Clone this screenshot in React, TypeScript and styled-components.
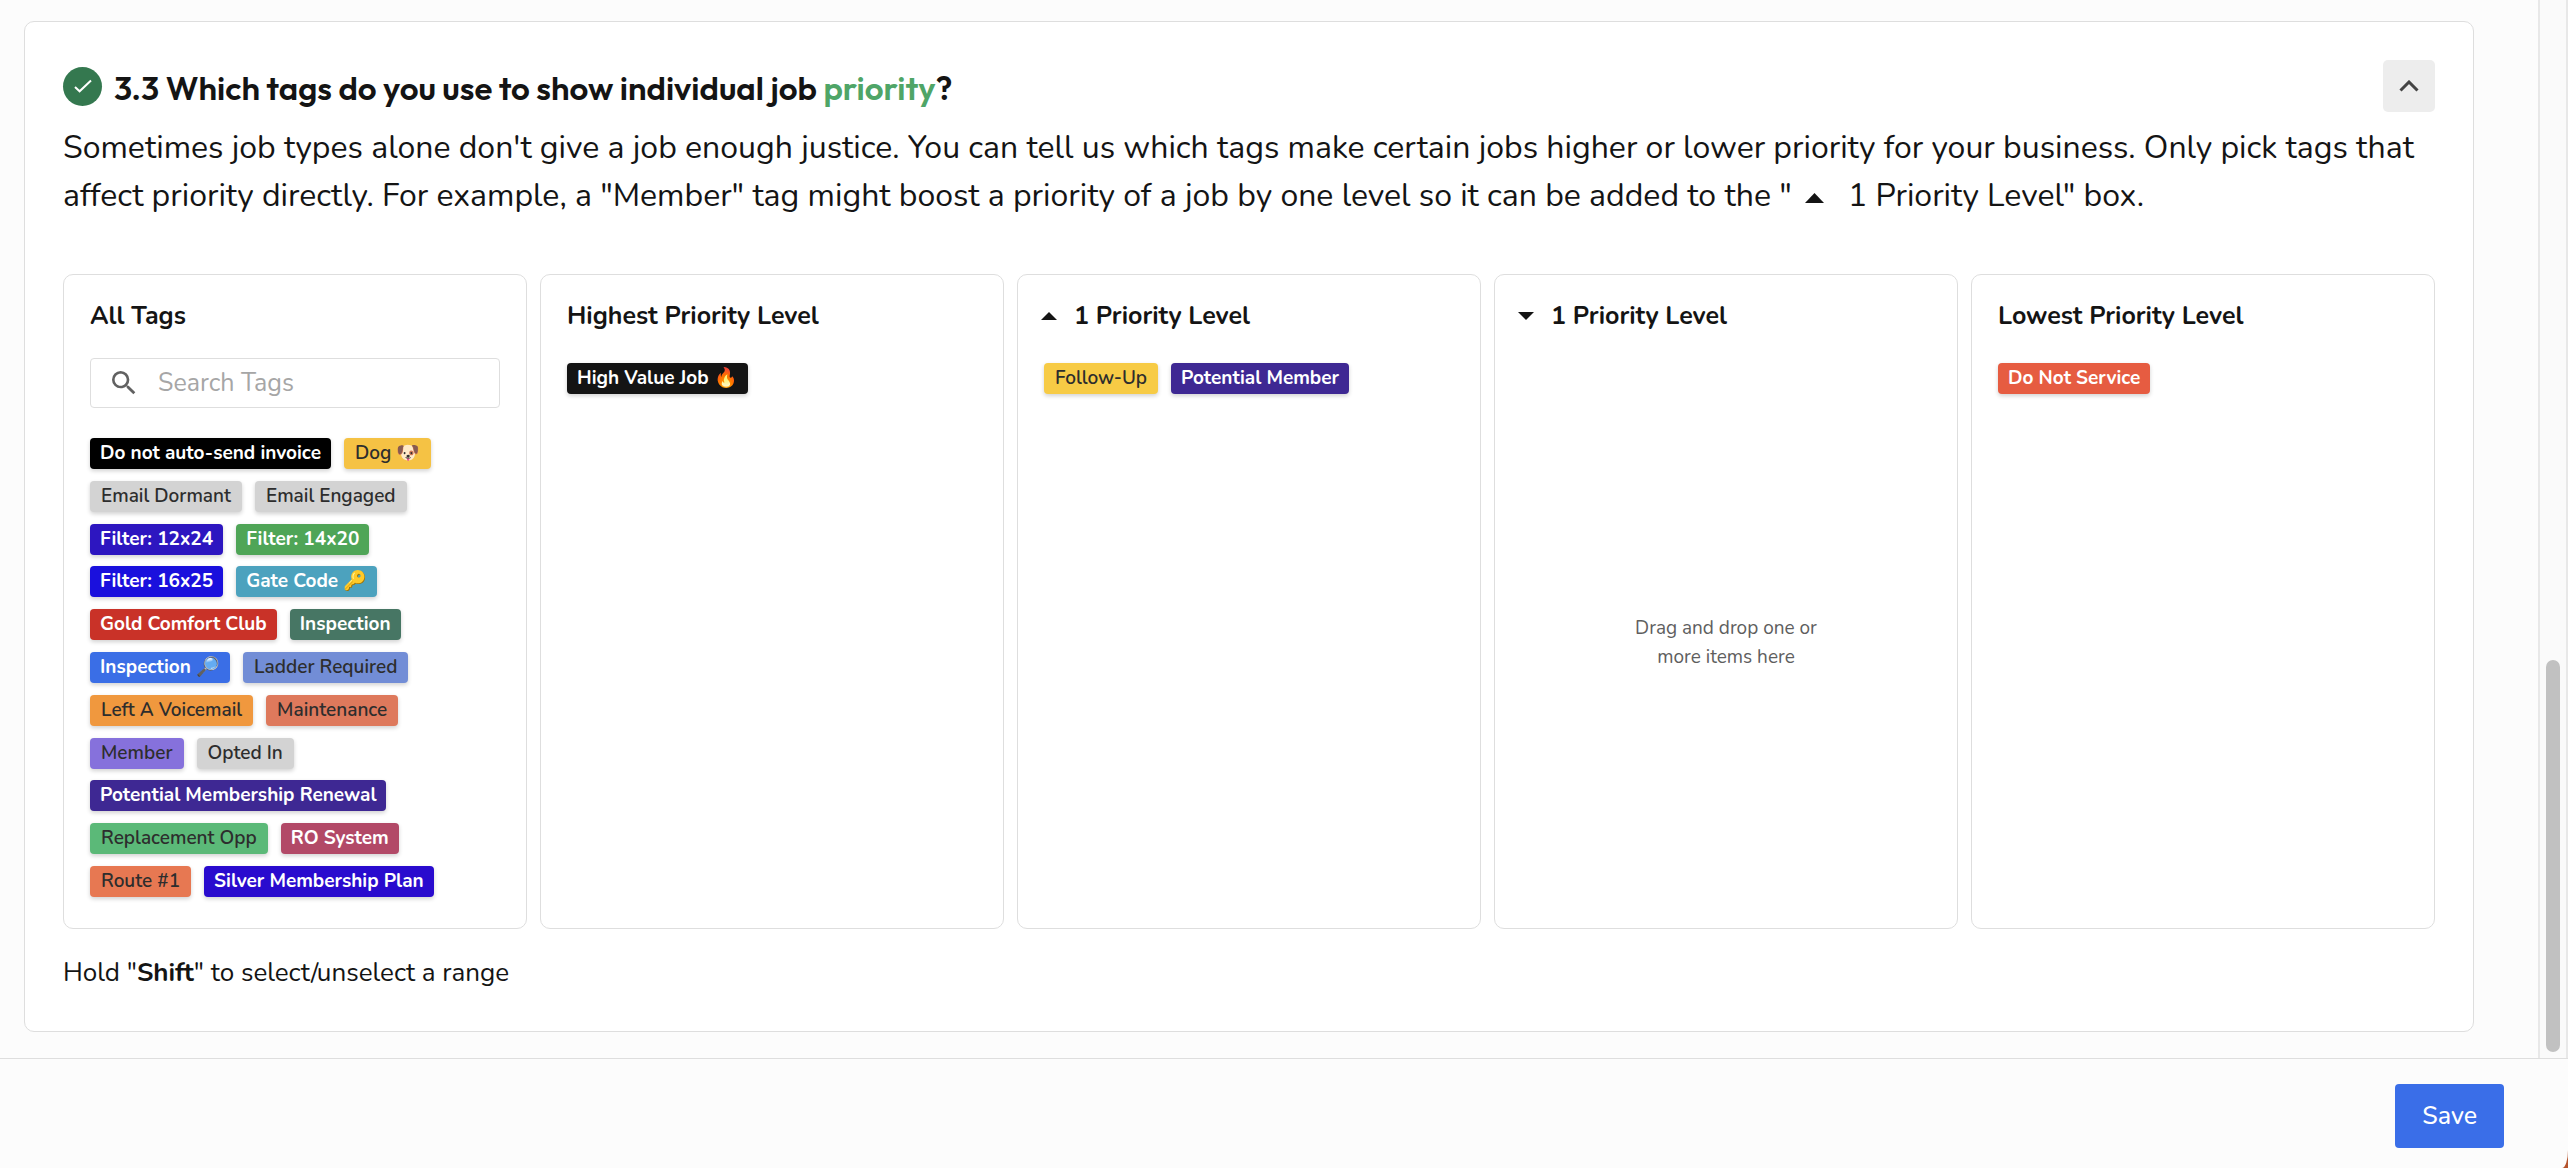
import React from "react";
import styled, { createGlobalStyle } from "styled-components";

const Global = createGlobalStyle`
  *, *::before, *::after { box-sizing: border-box; }
  body {
    margin: 0;
    background: #b4532c;
    color: #141414;
    font-family: Nunito, "Nunito Sans", "Open Sans", "Noto Sans", sans-serif;
  }
  h2, h3, p, ul { margin: 0; padding: 0; }
  button, input { font: inherit; }
`;

const Page = styled.div`
  min-height: 100vh;
  display: flex;
  flex-direction: column;
  background: #fcfcfc;
  border-bottom-right-radius: 6px 18px;
`;

const Body = styled.div`
  flex: 1;
  display: flex;
`;

const Content = styled.main`
  flex: 1;
  min-width: 0;
  padding: 21px 64px 26px 24px;
`;

const ScrollTrack = styled.div`
  width: 30px;
  display: flex;
  flex-direction: column;
  justify-content: flex-end;
  padding: 6px;
  background: #fafafa;
  border: solid #e8e8e8;
  border-width: 0 2px;
`;

const ScrollThumb = styled.div`
  height: 37.5%;
  border-radius: 8px;
  background: #c1c1c1;
`;

const Card = styled.section`
  padding: 38px 38px 40px;
  background: #fff;
  border: 1px solid #dedede;
  border-radius: 10px;
`;

const CardHead = styled.header`
  display: flex;
  align-items: center;
  gap: 12px;
`;

const Done = styled.span`
  width: 39px;
  height: 39px;
  display: grid;
  place-items: center;
  border-radius: 50%;
  background: #34784f;
`;

const Question = styled.h2`
  flex: 1;
  padding-top: 4px;
  font-family: Outfit, Urbanist, Nunito, "Open Sans", sans-serif;
  font-size: 33px;
  line-height: 48px;
  font-weight: 600;
`;

const Accent = styled.span`
  color: #4fa567;
`;

const CollapseButton = styled.button`
  width: 52px;
  height: 52px;
  display: grid;
  place-items: center;
  padding: 0;
  border: 0;
  border-radius: 5px;
  background: #ededed;
  cursor: pointer;
`;

const Description = styled.p`
  margin-top: 12px;
  font-size: 32px;
  line-height: 48px;
`;

const InlineCaret = styled.svg`
  margin: 0 24px 0 5px;
  vertical-align: 3px;
`;

const Board = styled.div`
  display: grid;
  grid-template-columns: repeat(5, minmax(0, 1fr));
  gap: 13px;
  min-height: 655px;
  margin-top: 54px;
`;

const Column = styled.section`
  display: flex;
  flex-direction: column;
  padding: 23px 26px 31px;
  border: 1px solid #dedede;
  border-radius: 10px;
`;

const ColumnTitle = styled.h3<{ $marked?: boolean }>`
  display: flex;
  align-items: center;
  gap: 17px;
  margin-left: ${p => (p.$marked ? "-3px" : "0")};
  font-size: 25px;
  line-height: 36px;
  font-weight: 700;
`;

const SearchBox = styled.label`
  display: flex;
  align-items: center;
  gap: 18px;
  height: 50px;
  margin-top: 24px;
  padding: 0 17px;
  border: 1px solid #dedede;
  border-radius: 4px;
`;

const SearchInput = styled.input`
  flex: 1;
  min-width: 0;
  padding: 0;
  border: 0;
  outline: 0;
  background: transparent;
  font-size: 25px;
  &::placeholder { color: #a6a6a6; opacity: 1; }
`;

const TagList = styled.ul<{ $spread?: boolean }>`
  && { padding-right: 13px; }
  flex: 1;
  display: flex;
  flex-wrap: wrap;
  align-content: ${p => (p.$spread ? "space-between" : "flex-start")};
  gap: 10px 13px;
  margin-top: ${p => (p.$spread ? "30px" : "29px")};
  list-style: none;
`;

const TagChip = styled.li<{ $bg: string; $light?: boolean }>`
  height: 31px;
  padding: 0 ${p => (p.$light ? "10px" : "11px")};
  border-radius: 4px;
  background: ${p => p.$bg};
  box-shadow: 0 2px 4px rgba(0, 0, 0, 0.18);
  color: ${p => (p.$light ? "#fff" : "#2d2d2d")};
  font-size: 19px;
  line-height: 30px;
  font-weight: ${p => (p.$light ? 700 : 600)};
  white-space: nowrap;
  cursor: grab;
`;

const EmptyZone = styled.div`
  flex: 1;
  display: grid;
  place-items: center;
  margin-top: 54px;
`;

const EmptyText = styled.p`
  max-width: 200px;
  color: #5e5e5e;
  font-size: 19px;
  line-height: 29px;
  text-align: center;
`;

const Hint = styled.p`
  margin-top: 26px;
  font-size: 26px;
  line-height: 36px;
`;

const Footer = styled.footer`
  display: flex;
  justify-content: flex-end;
  padding: 25px 64px 20px;
  border-top: 1px solid #dedede;
`;

const SaveButton = styled.button`
  height: 64px;
  padding: 0 27px;
  border: 0;
  border-radius: 4px;
  background: #3a6ee8;
  color: #fff;
  font-size: 25px;
  font-weight: 500;
  cursor: pointer;
`;

type Tag = { name: string; bg: string; light?: boolean };
type Level = { title: string; caret?: "up" | "down"; tags: Tag[] };

const allTags: Tag[] = [
  { name: "Do not auto-send invoice", bg: "#000000", light: true },
  { name: "Dog 🐶", bg: "#f5c244" },
  { name: "Email Dormant", bg: "#d3d3d3" },
  { name: "Email Engaged", bg: "#d3d3d3" },
  { name: "Filter: 12x24", bg: "#2d16c0", light: true },
  { name: "Filter: 14x20", bg: "#4fa557", light: true },
  { name: "Filter: 16x25", bg: "#1a10dd", light: true },
  { name: "Gate Code 🔑", bg: "#4ca2be", light: true },
  { name: "Gold Comfort Club", bg: "#c93228", light: true },
  { name: "Inspection", bg: "#477664", light: true },
  { name: "Inspection 🔎", bg: "#3a6ee6", light: true },
  { name: "Ladder Required", bg: "#728dd6" },
  { name: "Left A Voicemail", bg: "#f0983e" },
  { name: "Maintenance", bg: "#de795c" },
  { name: "Member", bg: "#8671dc" },
  { name: "Opted In", bg: "#d3d3d3" },
  { name: "Potential Membership Renewal", bg: "#3e2893", light: true },
  { name: "Replacement Opp", bg: "#5bb978" },
  { name: "RO System", bg: "#b24967", light: true },
  { name: "Route #1", bg: "#e77852" },
  { name: "Silver Membership Plan", bg: "#290bce", light: true },
];

const levels: Level[] = [
  { title: "Highest Priority Level", tags: [{ name: "High Value Job 🔥", bg: "#141414", light: true }] },
  {
    title: "1 Priority Level",
    caret: "up",
    tags: [
      { name: "Follow-Up", bg: "#f7cb45" },
      { name: "Potential Member", bg: "#3e2893", light: true },
    ],
  },
  { title: "1 Priority Level", caret: "down", tags: [] },
  { title: "Lowest Priority Level", tags: [{ name: "Do Not Service", bg: "#e65c41", light: true }] },
];

function Tags({ tags, spread }: { tags: Tag[]; spread?: boolean }) {
  return (
    <TagList $spread={spread}>
      {tags.map(t => (
        <TagChip key={t.name} $bg={t.bg} $light={t.light} draggable>
          {t.name}
        </TagChip>
      ))}
    </TagList>
  );
}

function Caret({ dir }: { dir: "up" | "down" }) {
  return (
    <svg width="16" height="8" viewBox="0 0 16 8" fill="#141414" aria-hidden="true">
      <path d={dir === "up" ? "M0 8 8 0l8 8z" : "M0 0h16L8 8z"} />
    </svg>
  );
}

export default function App() {
  return (
    <Page>
      <Global />
      <Body>
        <Content>
          <Card>
            <CardHead>
              <Done>
                <svg width="18" height="14" viewBox="0 0 18 14" fill="none" stroke="#fff" strokeWidth="2" aria-hidden="true">
                  <path d="M1 8l4.600 4.300L17 1.500" />
                </svg>
              </Done>
              <Question>
                3.3 Which tags do you use to show individual job <Accent>priority</Accent>?
              </Question>
              <CollapseButton type="button" aria-label="Collapse question">
                <svg width="20" height="12" viewBox="0 0 20 12" fill="none" stroke="#444" strokeWidth="3" aria-hidden="true">
                  <path d="M1.500 10.500 10 2l8.500 8.500" />
                </svg>
              </CollapseButton>
            </CardHead>
            <Description>
              Sometimes job types alone don't give a job enough justice. You can tell us which tags make certain jobs
              higher or lower priority for your business. Only pick tags that affect priority directly. For example, a
              "Member" tag might boost a priority of a job by one level so it can be added to the "{" "}
              <InlineCaret width="19" height="10" viewBox="0 0 19 10" fill="#141414" aria-hidden="true">
                <path d="M0 10 9.500 0 19 10z" />
              </InlineCaret>
              1 Priority Level" box.
            </Description>
            <Board>
              <Column>
                <ColumnTitle>All Tags</ColumnTitle>
                <SearchBox>
                  <svg width="32" height="32" viewBox="0 0 24 24" fill="#616161" aria-hidden="true">
                    <path d="M15.500 14h-.79l-.28-.27A6.471 6.471 0 0 0 16 9.500 6.500 6.500 0 1 0 9.500 16c1.610 0 3.090-.59 4.230-1.570l.27.28v.79l5 4.990L20.490 19l-4.990-5zm-6 0C7.010 14 5 11.990 5 9.500S7.010 5 9.500 5 14 7.010 14 9.500 11.990 14 9.500 14z" />
                  </svg>
                  <SearchInput type="text" placeholder="Search Tags" aria-label="Search Tags" />
                </SearchBox>
                <Tags tags={allTags} spread />
              </Column>
              {levels.map((level, i) => (
                <Column key={i}>
                  <ColumnTitle $marked={!!level.caret}>
                    {level.caret && <Caret dir={level.caret} />}
                    {level.title}
                  </ColumnTitle>
                  {level.tags.length > 0 ? (
                    <Tags tags={level.tags} />
                  ) : (
                    <EmptyZone>
                      <EmptyText>Drag and drop one or more items here</EmptyText>
                    </EmptyZone>
                  )}
                </Column>
              ))}
            </Board>
            <Hint>
              Hold "<b>Shift</b>" to select/unselect a range
            </Hint>
          </Card>
        </Content>
        <ScrollTrack aria-hidden="true">
          <ScrollThumb />
        </ScrollTrack>
      </Body>
      <Footer>
        <SaveButton type="button">Save</SaveButton>
      </Footer>
    </Page>
  );
}
